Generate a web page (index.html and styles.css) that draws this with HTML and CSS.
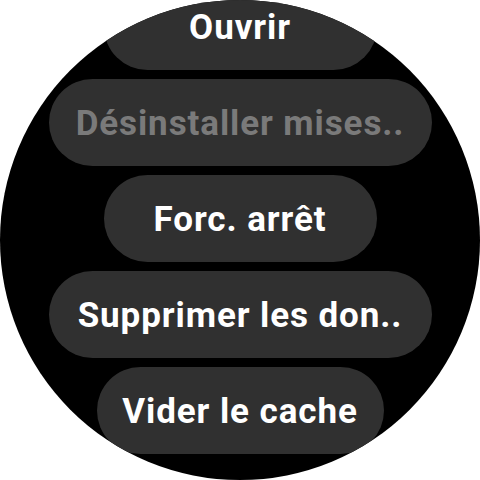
FILE: index.html
```html
<!DOCTYPE html>
<html lang="fr">
<head>
    <meta charset="UTF-8">
    <meta name="viewport" content="width=device-width, initial-scale=1.0">
    <title>Infos sur l'appli</title>
    <link rel="stylesheet" href="styles.css">
</head>
<body>
    <div class="watch">
        <div class="chip-list">
            <button class="chip chip-short">Ouvrir</button>
            <button class="chip chip-wide" disabled>Désinstaller mises..</button>
            <button class="chip chip-short">Forc. arrêt</button>
            <button class="chip chip-wide">Supprimer les don..</button>
            <button class="chip chip-mid">Vider le cache</button>
        </div>
    </div>
</body>
</html>
```

FILE: styles.css
```css
* {
    margin: 0;
    padding: 0;
    box-sizing: border-box;
}

body {
    background-color: #fff;
    font-family: Roboto, 'Noto Sans', sans-serif;
}

.watch {
    width: 480px;
    height: 480px;
    border-radius: 50%;
    background-color: #000;
    overflow: hidden;
}

.chip-list {
    display: flex;
    flex-direction: column;
    align-items: center;
    gap: 9px;
    margin-top: -17px;
}

.chip {
    height: 87px;
    padding-top: 1px;
    border: none;
    border-radius: 44px;
    background-color: #303030;
    color: #fff;
    font-family: Roboto, 'Noto Sans', sans-serif;
    font-size: 35px;
    font-weight: 700;
    letter-spacing: 0.9px;
    white-space: nowrap;
}

.chip:disabled {
    color: #7a7a7a;
}

.chip-short {
    width: 273px;
}

.chip-mid {
    width: 287px;
}

.chip-wide {
    width: 383px;
}
```
